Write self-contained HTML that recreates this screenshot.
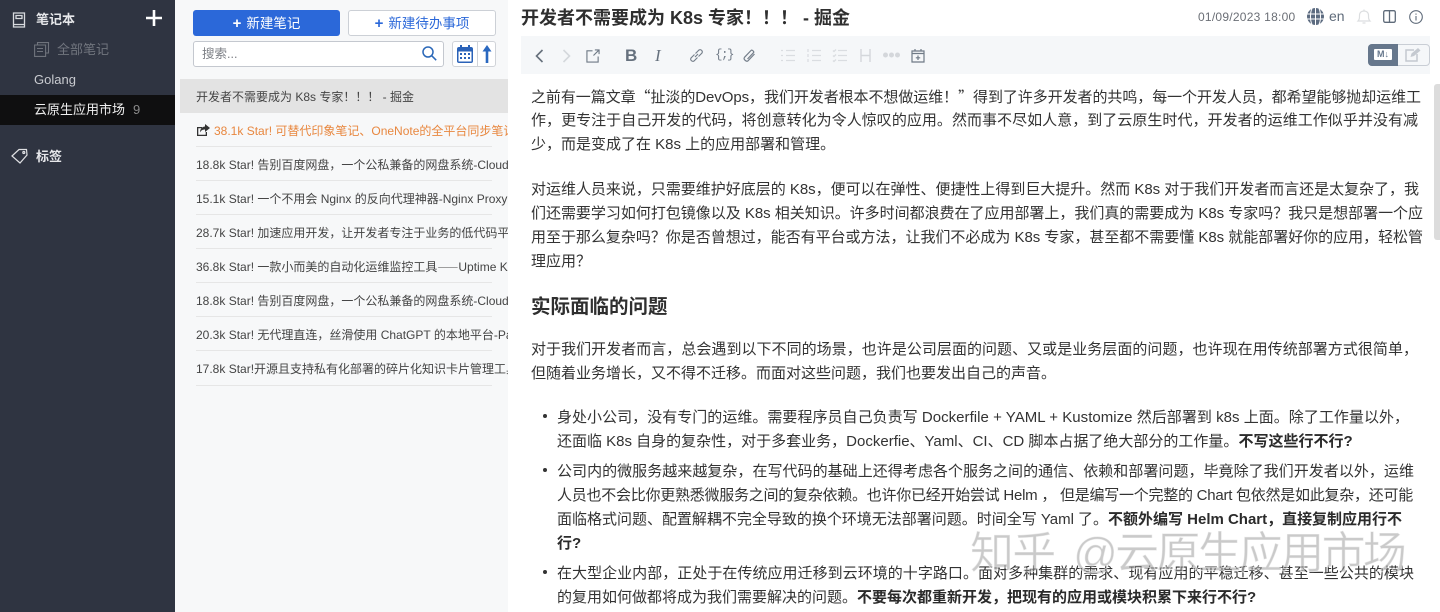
<!DOCTYPE html>
<html lang="zh"><head><meta charset="utf-8"><title>Leanote</title>
<style>
html,body{margin:0;padding:0;width:1440px;height:612px;overflow:hidden;background:#fff}
body{font-family:"Liberation Sans","Noto Sans CJK SC",sans-serif;position:relative;color:#333}
.a{position:absolute;white-space:nowrap}
svg{position:absolute;overflow:visible}
#side{position:absolute;left:0;top:0;width:175px;height:612px;background:#2f3441}
#list{position:absolute;left:175px;top:0;width:333px;height:612px;background:#f7f8f9;border-left:0;overflow:hidden}
.it{position:absolute;left:21px;font-size:12px;line-height:16px;color:#444;white-space:nowrap;width:312px;overflow:hidden}
.sep{position:absolute;left:21px;width:296px;height:1px;background:#e6e6e6}
.l{position:absolute;font-size:15px;line-height:24px;height:24px;color:#333;white-space:nowrap;letter-spacing:-.15px}
.l.e{letter-spacing:0}
.l b{color:#2b2b2b}
.c{font-family:"Noto Sans CJK SC",sans-serif}
.dot{position:absolute;left:543px;width:4px;height:4px;border-radius:50%;background:#333}
</style></head><body>

<div id="side">
 <svg style="left:12px;top:12px" width="14" height="16" viewBox="0 0 14 16" fill="none" stroke="#d8dade" stroke-width="1.3"><path d="M1.500 1h11v11.500h-11zM1.500 12.500v2.500h11v-2.500M4 3.500h6v3H4z"/></svg>
 <div class="a" style="left:36px;top:12px;font-size:13px;line-height:16px;font-weight:700;color:#e6e7ea">笔记本</div>
 <svg style="left:146px;top:10px" width="16" height="16" viewBox="0 0 16 16"><path d="M6.700 0h2.600v6.700H16v2.600H9.300V16H6.700V9.300H0V6.700h6.700z" fill="#fff"/></svg>
 <svg style="left:34px;top:42px" width="15" height="15" viewBox="0 0 15 15" fill="none" stroke="#6f737c" stroke-width="1.100"><path d="M3.500 3V.6h11V11H12M.6 3h11v11.400H.6zM3 6.500h6M3 9.500h6"/></svg>
 <div class="a" style="left:57px;top:42px;font-size:13px;line-height:16px;color:#71757e">全部笔记</div>
 <div class="a" style="left:34px;top:72px;font-size:13px;line-height:16px;color:#c9cbd0">Golang</div>
 <div class="a" style="left:0;top:95px;width:175px;height:30px;background:#0f0f10"></div>
 <div class="a" style="left:34px;top:102px;font-size:13px;line-height:16px;color:#f0f0f0">云原生应用市场</div>
 <div class="a" style="left:133px;top:102px;font-size:13px;line-height:16px;color:#8a8a8a">9</div>
 <svg style="left:11px;top:148px" width="17" height="16" viewBox="0 0 17 16" fill="none" stroke="#dfe0e3" stroke-width="1.200"><path d="M1 8l7-6.500h7.500L16 7 9 15z"/><circle cx="12.800" cy="4.500" r="1"/></svg>
 <div class="a" style="left:36px;top:149px;font-size:13px;line-height:16px;font-weight:700;color:#e6e7ea">标签</div>
</div>

<div id="list">
 <div class="a" style="left:18px;top:10px;width:147px;height:26px;background:#2b68d9;border-radius:3px"></div>
 <div class="a" style="left:18px;top:15px;width:147px;text-align:center;font-size:13.500px;line-height:17px;color:#fff"><span style="font-weight:700;font-size:15px;margin-right:5px">+</span>新建笔记</div>
 <div class="a" style="left:173px;top:10px;width:146px;height:24px;background:#fff;border:1px solid #ccd0d6;border-radius:3px"></div>
 <div class="a" style="left:173px;top:15px;width:148px;text-align:center;font-size:13.500px;line-height:17px;color:#2b68d9"><span style="font-weight:700;font-size:15px;margin-right:5px">+</span>新建待办事项</div>
 <div class="a" style="left:18px;top:41px;width:249px;height:24px;background:#fff;border:1px solid #c4c8cf;border-radius:3px"></div>
 <div class="a" style="left:27px;top:46px;font-size:12.500px;line-height:16px;color:#7c7f85">搜索...</div>
 <svg style="left:247px;top:46px" width="15" height="15" viewBox="0 0 15 15" fill="none" stroke="#2b68b8" stroke-width="1.500"><circle cx="6" cy="6" r="5"/><path d="M9.700 9.700l4.500 4.500"/></svg>
 <div class="a" style="left:277px;top:41px;width:42px;height:24px;background:#fff;border:1px solid #d0d3d8;border-radius:3px"></div>
 <div class="a" style="left:302px;top:42px;width:1px;height:24px;background:#d0d3d8"></div>
 <svg style="left:282px;top:45px" width="16" height="18" viewBox="0 0 16 18"><path d="M0 4a2 2 0 0 1 2-2h12a2 2 0 0 1 2 2v12a2 2 0 0 1-2 2H2a2 2 0 0 1-2-2z" fill="#2a62b8"/><rect x="3" y="0" width="2" height="4" fill="#2a62b8"/><rect x="11" y="0" width="2" height="4" fill="#2a62b8"/><rect x="1.500" y="6.500" width="13" height="10" fill="#fff"/><path d="M3 8h2v2H3zM7 8h2v2H7zM11 8h2v2h-2zM3 12h2v2H3zM7 12h2v2H7zM11 12h2v2h-2z" fill="#2a62b8"/></svg>
 <svg style="left:307px;top:45px" width="10" height="18" viewBox="0 0 10 18"><path d="M5 0l4.500 6.500H6.300V18H3.700V6.500H.5z" fill="#2a68c0"/></svg>

 <div class="a" style="left:5px;top:79px;width:328px;height:34px;background:#e3e3e3"></div>
 <div class="it" style="top:89px">开发者不需要成为 K8s 专家！！！ - 掘金</div>
 <svg style="left:21px;top:124px" width="14" height="12" viewBox="0 0 14 12"><path d="M1 3h5v1.300H2.300v6.400h7.400V8H11v4H1z" fill="#333"/><path d="M9 0l5 4-5 4V5.500C6.500 5.500 5 6.500 4 8.500 4 5 6 2.700 9 2.500z" fill="#333"/></svg>
 <div class="it" style="top:123px;left:39px;width:294px;color:#e8873f">38.1k Star! 可替代印象笔记、OneNote的全平台同步笔记</div>
 <div class="sep" style="top:146px"></div>
 <div class="it" style="top:157px">18.8k Star! 告别百度网盘，一个公私兼备的网盘系统-Cloudreve</div>
 <div class="sep" style="top:180px"></div>
 <div class="it" style="top:191px">15.1k Star! 一个不用会 Nginx 的反向代理神器-Nginx Proxy Manager</div>
 <div class="sep" style="top:214px"></div>
 <div class="it" style="top:225px">28.7k Star! 加速应用开发，让开发者专注于业务的低代码平台</div>
 <div class="sep" style="top:248px"></div>
 <div class="it" style="top:259px">36.8k Star! 一款小而美的自动化运维监控工具<span class="c" style="font-size:10.500px">——</span>Uptime Kuma</div>
 <div class="sep" style="top:282px"></div>
 <div class="it" style="top:293px">18.8k Star! 告别百度网盘，一个公私兼备的网盘系统-Cloudreve</div>
 <div class="sep" style="top:316px"></div>
 <div class="it" style="top:327px">20.3k Star! 无代理直连，丝滑使用 ChatGPT 的本地平台-Pandora</div>
 <div class="sep" style="top:350px"></div>
 <div class="it" style="top:361px">17.8k Star!开源且支持私有化部署的碎片化知识卡片管理工具</div>
 <div class="sep" style="top:385px"></div>
</div>

<div class="a" style="left:521px;top:6px;font-size:18px;line-height:24px;font-weight:700;color:#2f2f2f">开发者不需要成为 K8s 专家！！！ - 掘金</div>
<div class="a" style="left:1198px;top:9px;font-size:12px;line-height:16px;color:#6b6f76;letter-spacing:.25px">01/09/2023 18:00</div>
<svg style="left:1307px;top:8px" width="17" height="17" viewBox="0 0 17 17"><circle cx="8.500" cy="8.500" r="8.500" fill="#5c6b80"/><path d="M0 6h17M0 11h17M8.500 0v17M5 0.500c-2 4-2 12 0 16M12 0.500c2 4 2 12 0 16" stroke="#fff" stroke-width="1" fill="none"/></svg>
<div class="a" style="left:1329px;top:8px;font-size:14px;line-height:17px;color:#5f6b7a">en</div>
<svg style="left:1357px;top:9px" width="14" height="15" viewBox="0 0 14 15" fill="none" stroke="#dcdee0" stroke-width="1.200"><path d="M1 12c1.500-1.500 1.500-3 1.500-5.500C2.500 3.500 4.500 2 7 2s4.500 1.500 4.500 4.500c0 2.500 0 4 1.500 5.500zM5.500 14h3M7 .5V2"/></svg>
<svg style="left:1383px;top:10px" width="13" height="13" viewBox="0 0 13 13" fill="none" stroke="#5f6b7a" stroke-width="1.300"><rect x=".7" y=".7" width="11.600" height="11.600" rx="1.500"/><path d="M6.500 .7v11.600"/></svg>
<svg style="left:1409px;top:10px" width="14" height="14" viewBox="0 0 14 14" fill="none" stroke="#5f6b7a" stroke-width="1.100"><circle cx="7" cy="7" r="6.300"/><path d="M7 6v4.500M7 3.500v1.300"/></svg>

<div class="a" style="left:521px;top:36px;width:909px;height:38px;background:#f5f7f9"></div>
<svg style="left:535px;top:49px" width="9" height="14" viewBox="0 0 9 14" fill="none" stroke="#66707c" stroke-width="1.600"><path d="M7.500 1L1.500 7l6 6"/></svg>
<svg style="left:562px;top:49px" width="9" height="14" viewBox="0 0 9 14" fill="none" stroke="#d4d8dc" stroke-width="1.600"><path d="M1.500 1l6 6-6 6"/></svg>
<svg style="left:586px;top:49px" width="14" height="14" viewBox="0 0 15 15" fill="none" stroke="#6f7a86" stroke-width="1.200"><path d="M7 2H1v12h12V8M8 7l6-6M9.500 1H14v4.500"/></svg>
<div class="a" style="left:625px;top:46px;font-size:17px;line-height:20px;font-weight:700;color:#66717e">B</div>
<div class="a" style="left:655px;top:46px;font-size:17px;line-height:20px;font-style:italic;font-family:'Liberation Serif',serif;color:#66717e">I</div>
<svg style="left:689px;top:48px" width="15" height="15" viewBox="0 0 15 15" fill="none" stroke="#747e8a" stroke-width="1.100"><path d="M6 9L9 6M5.500 6.500L2 10a2.200 2.200 0 0 0 3 3l3.500-3.500M9.500 8.500L13 5a2.200 2.200 0 0 0-3-3L6.500 5.500"/></svg>
<div class="a" style="left:715px;top:47px;font-size:12.500px;line-height:17px;color:#747e8a;font-family:'Liberation Mono',monospace;letter-spacing:-1.500px">{;}</div>
<svg style="left:742px;top:48px" width="14" height="15" viewBox="0 0 14 15" fill="none" stroke="#747e8a" stroke-width="1.200"><path d="M12.500 6L6 12.800c-1.500 1.500-5 -1.500-3.500-3.500L9 2.500c1-1 3.500 1 2.500 2.200L5.500 11"/></svg>
<svg style="left:781px;top:49px" width="14" height="13" viewBox="0 0 14 13" fill="none" stroke="#dadde1" stroke-width="1.300"><path d="M0 1.500h2M5 1.500h9M0 6.500h2M5 6.500h9M0 11.500h2M5 11.500h9"/></svg>
<svg style="left:807px;top:49px" width="14" height="13" viewBox="0 0 14 13" fill="none" stroke="#dadde1" stroke-width="1.300"><path d="M1 0v3M1 5v3M1 10v3M5 1.500h9M5 6.500h9M5 11.500h9"/></svg>
<svg style="left:833px;top:49px" width="14" height="13" viewBox="0 0 14 13" fill="none" stroke="#dadde1" stroke-width="1.300"><path d="M0 1.500l1 1 2-2M0 6.500l1 1 2-2M0 11.500l1 1 2-2M5 1.500h9M5 6.500h9M5 11.500h9"/></svg>
<svg style="left:860px;top:49px" width="11" height="13" viewBox="0 0 11 13" fill="none" stroke="#d4d7db" stroke-width="1.400"><path d="M1 0v13M10 0v13M1 6.500h9"/></svg>
<svg style="left:883px;top:52px" width="17" height="6" viewBox="0 0 17 6" fill="#d4d7db"><circle cx="2.500" cy="3" r="2.500"/><circle cx="8.500" cy="3" r="2.500"/><circle cx="14.500" cy="3" r="2.500"/></svg>
<svg style="left:911px;top:48px" width="14" height="15" viewBox="0 0 14 15" fill="none" stroke="#6f7a86" stroke-width="1.200"><path d="M1 3h12v11H1zM1 5.500h12M4 1v2.500M10 1v2.500M7 7.500v4.500M4.800 9.800h4.400"/></svg>

<div class="a" style="left:1368px;top:44px;width:60px;height:20px;border:1px solid #c9ced5;border-radius:4px"></div>
<div class="a" style="left:1368px;top:44px;width:30px;height:22px;background:#66778c;border-radius:4px 0 0 4px"></div>
<div class="a" style="left:1374px;top:49px;width:18px;height:11px;background:#fff;border-radius:1px;color:#66778c;font-size:9px;line-height:11px;font-weight:700;text-align:center;letter-spacing:0">M↓</div>
<svg style="left:1405px;top:47px" width="17" height="15" viewBox="0 0 17 15" fill="none" stroke="#c4c9d0" stroke-width="1.500"><path d="M12 7v7H1V3h8"/><path d="M5.500 10l1-3.500L13 1l2.500 2.500L9 9z" fill="#c4c9d0" stroke="none"/></svg>

<div class="a" style="left:1434px;top:84px;width:6px;height:156px;background:#dcdcdc;border-radius:3px 0 0 3px"></div>

<div class="l f" style="left:531px;top:85px;width:890px">之前有一篇文章<span class="c">“</span>扯淡的DevOps，我们开发者根本不想做运维！<span class="c">”</span>得到了许多开发者的共鸣，每一个开发人员，都希望能够抛却运维工</div>
<div class="l f" style="left:531px;top:109px;width:887px">作，更专注于自己开发的代码，将创意转化为令人惊叹的应用。然而事不尽如人意，到了云原生时代，开发者的运维工作似乎并没有减</div>
<div class="l e" style="left:531px;top:133px">少，而是变成了在 K8s 上的应用部署和管理。</div>

<div class="l f" style="left:531px;top:178px;width:888px">对运维人员来说，只需要维护好底层的 K8s，便可以在弹性、便捷性上得到巨大提升。然而 K8s 对于我们开发者而言还是太复杂了，我</div>
<div class="l f" style="left:531px;top:202px;width:892px">们还需要学习如何打包镜像以及 K8s 相关知识。许多时间都浪费在了应用部署上，我们真的需要成为 K8s 专家吗？我只是想部署一个应</div>
<div class="l f" style="left:531px;top:226px;width:892px">用至于那么复杂吗？你是否曾想过，能否有平台或方法，让我们不必成为 K8s 专家，甚至都不需要懂 K8s 就能部署好你的应用，轻松管</div>
<div class="l e" style="left:531px;top:250px">理应用？</div>

<div class="a" style="left:531px;top:294px;font-size:19.500px;line-height:26px;font-weight:700;color:#2f2f2f">实际面临的问题</div>

<div class="l f" style="left:531px;top:338px;width:887px">对于我们开发者而言，总会遇到以下不同的场景，也许是公司层面的问题、又或是业务层面的问题，也许现在用传统部署方式很简单，</div>
<div class="l e" style="left:531px;top:362px">但随着业务增长，又不得不迁移。而面对这些问题，我们也要发出自己的声音。</div>

<div class="dot" style="top:414px"></div>
<div class="l f" style="left:557px;top:406px;width:852px">身处小公司，没有专门的运维。需要程序员自己负责写 Dockerfile + YAML + Kustomize 然后部署到 k8s 上面。除了工作量以外，</div>
<div class="l e" style="left:557px;top:430px">还面临 K8s 自身的复杂性，对于多套业务，Dockerfie、Yaml、CI、CD 脚本占据了绝大部分的工作量。<b>不写这些行不行?</b></div>

<div class="dot" style="top:468px"></div>
<div class="l f" style="left:557px;top:460px;width:857px">公司内的微服务越来越复杂，在写代码的基础上还得考虑各个服务之间的通信、依赖和部署问题，毕竟除了我们开发者以外，运维</div>
<div class="l f" style="left:557px;top:484px;width:856px">人员也不会比你更熟悉微服务之间的复杂依赖。也许你已经开始尝试 Helm ， 但是编写一个完整的 Chart 包依然是如此复杂，还可能</div>
<div class="l f" style="left:557px;top:508px;width:845px">面临格式问题、配置解耦不完全导致的换个环境无法部署问题。时间全写 Yaml 了。<b>不额外编写 Helm Chart，直接复制应用行不</b></div>
<div class="l e" style="left:557px;top:532px"><b>行?</b></div>

<div class="dot" style="top:570px"></div>
<div class="l f" style="left:557px;top:562px;width:857px">在大型企业内部，正处于在传统应用迁移到云环境的十字路口。面对多种集群的需求、现有应用的平稳迁移、甚至一些公共的模块</div>
<div class="l e" style="left:557px;top:586px">的复用如何做都将成为我们需要解决的问题。<b>不要每次都重新开发，把现有的应用或模块积累下来行不行?</b></div>

<div class="a" style="left:970px;top:524px;font-size:44px;line-height:60px;color:rgba(150,150,150,.5);-webkit-text-stroke:1px rgba(255,255,255,.55);letter-spacing:-1.700px;word-spacing:8px">知乎 <span style="letter-spacing:-2.700px">@云原生应用市场</span></div>
<script>
document.querySelectorAll('.l.f').forEach(function(el){
  var target=parseFloat(el.style.width);
  el.style.letterSpacing='0';
  var r=document.createRange();r.selectNodeContents(el);
  var w=r.getBoundingClientRect().width;
  var n=el.textContent.length;
  el.style.letterSpacing=((target-w)/n).toFixed(3)+'px';
});
</script>
</body></html>
